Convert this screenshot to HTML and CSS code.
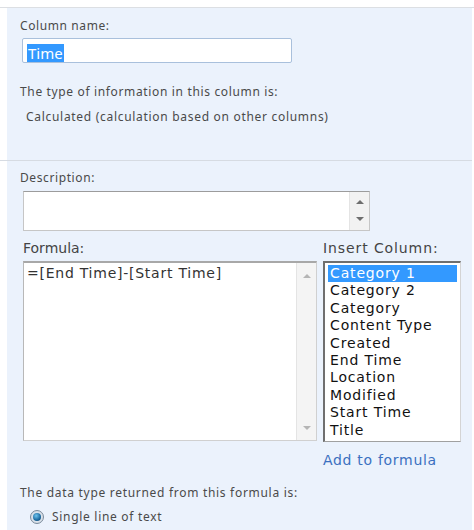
FILE: index.html
```html
<!DOCTYPE html>
<html>
<head>
<meta charset="utf-8">
<link rel="stylesheet" href="styles.css">
</head>
<body>
<div class="topbar"></div>
<section class="panel first">
  <div class="label">Column name:</div>
  <div class="input"><span class="sel">Time</span></div>
  <div class="label type-label">The type of information in this column is:</div>
  <div class="value">Calculated (calculation based on other columns)</div>
</section>
<div class="sep"></div>
<section class="panel second">
  <div class="label">Description:</div>
  <div class="desc">
    <div class="desc-text"></div>
    <div class="vscroll small">
      <span class="arrow up"></span>
      <span class="arrow down"></span>
    </div>
  </div>
  <div class="formula-row">
    <div class="col-formula">
      <div class="biglabel">Formula:</div>
      <div class="formula-box">
        <div class="formula-text">=[End Time]-[Start Time]</div>
        <div class="vscroll tall">
          <span class="arrow up light"></span>
          <span class="arrow down light"></span>
        </div>
      </div>
    </div>
    <div class="col-insert">
      <div class="biglabel insert-label">Insert Column:</div>
      <ul class="listbox">
        <li class="selected">Category 1</li>
        <li>Category 2</li>
        <li>Category</li>
        <li>Content Type</li>
        <li>Created</li>
        <li>End Time</li>
        <li>Location</li>
        <li>Modified</li>
        <li>Start Time</li>
        <li>Title</li>
      </ul>
      <a class="add">Add to formula</a>
    </div>
  </div>
  <div class="label ret-label">The data type returned from this formula is:</div>
  <div class="radio-row"><span class="radio"><span class="dot"></span></span><span class="radio-text">Single line of text</span></div>
</section>
</body>
</html>
```

FILE: styles.css
```css
html, body {
  margin: 0;
  padding: 0;
  background: #ffffff;
}
body {
  width: 474px;
  height: 530px;
  overflow: hidden;
  font-family: "Noto Sans", "Open Sans", sans-serif;
  color: #4a4a4a;
}
.topbar {
  height: 7px;
  border-bottom: 1px solid #dcdfe3;
}
.panel {
  margin-left: 7px;
  width: 465px;
  background: #ebf2fc;
  box-sizing: border-box;
}
.first {
  height: 152px;
  padding: 11px 0 0 13px;
}
.label {
  font-size: 12px;
  line-height: 14px;
  height: 14px;
  letter-spacing: 0.6px;
  white-space: nowrap;
}
.input {
  margin: 5px 0 0 2px;
  width: 270px;
  height: 25px;
  box-sizing: border-box;
  border: 1px solid #a9c0dc;
  border-radius: 2px;
  background: #fff;
  padding: 3px 0 0 4px;
}
.sel {
  display: inline-block;
  background: #3399ff;
  color: #fff;
  font-size: 15px;
  line-height: 18px;
  padding: 0 1px;
}
.type-label {
  margin-top: 22px;
  letter-spacing: 0.65px;
}
.value {
  margin: 11px 0 0 6px;
  font-size: 12px;
  line-height: 14px;
  letter-spacing: 0.7px;
  white-space: nowrap;
}
.sep {
  width: 472px;
  height: 1px;
  background: #d6dbe2;
}
.second {
  height: 369px;
  padding: 10px 0 0 13px;
}
.desc {
  display: flex;
  margin: 6px 0 0 3px;
  width: 347px;
  height: 40px;
  box-sizing: border-box;
  border: 1px solid #c6c6c6;
  border-top-color: #9c9c9c;
  background: #fff;
}
.desc-text {
  flex: 1;
}
.vscroll {
  width: 20px;
  background: #f2f2f2;
  border-left: 1px solid #e4e4e4;
  display: flex;
  flex-direction: column;
  justify-content: space-between;
  align-items: center;
  box-sizing: border-box;
}
.vscroll.small {
  padding: 8px 0 9px;
}
.vscroll.tall {
  padding: 11px 0 10px;
  background: #f4f4f4;
}
.arrow {
  width: 0;
  height: 0;
  border-left: 4px solid transparent;
  border-right: 4px solid transparent;
}
.arrow.up {
  border-bottom: 4px solid #6e6e6e;
}
.arrow.down {
  border-top: 4px solid #6e6e6e;
}
.arrow.up.light {
  border-bottom-color: #b5b5b5;
}
.arrow.down.light {
  border-top-color: #b5b5b5;
}
.formula-row {
  display: flex;
  gap: 6px;
  margin: 10px 0 0 3px;
}
.biglabel {
  font-family: "DejaVu Sans", Verdana, sans-serif;
  font-size: 14px;
  line-height: 14px;
  height: 14px;
  color: #444;
  white-space: nowrap;
}
.insert-label {
  letter-spacing: 0.9px;
}
.formula-box {
  display: flex;
  margin-top: 6px;
  width: 294px;
  height: 180px;
  box-sizing: border-box;
  border: 1px solid #d0d0d0;
  border-top: 2px solid #a8a8a8;
  border-left-color: #b8b8b8;
  background: #fff;
}
.formula-text {
  flex: 1;
  padding: 2px 0 0 3px;
  font-family: "DejaVu Sans", Verdana, sans-serif;
  font-size: 14px;
  letter-spacing: 0.75px;
  line-height: 16px;
  color: #333;
  white-space: nowrap;
}
.col-insert {
  display: flex;
  flex-direction: column;
}
.listbox {
  list-style: none;
  margin: 6px 0 0 0;
  padding: 2px 3px 0 3px;
  width: 138px;
  height: 181px;
  box-sizing: border-box;
  border: 1px solid #a0a0a0;
  border-top: 2px solid #6f6f6f;
  border-left: 2px solid #6f6f6f;
  border-right-color: #d4d4d4;
  background: #fff;
}
.listbox li {
  font-family: "DejaVu Sans", Verdana, sans-serif;
  font-size: 14px;
  letter-spacing: 0.85px;
  line-height: 17.4px;
  height: 17.4px;
  color: #111;
  padding-left: 2px;
  white-space: nowrap;
}
.listbox li.selected {
  background: #3399ff;
  color: #fff;
}
.add {
  margin-top: 11px;
  font-family: "DejaVu Sans", Verdana, sans-serif;
  font-size: 14px;
  letter-spacing: 0.7px;
  line-height: 14px;
  color: #3b70c0;
  white-space: nowrap;
}
.ret-label {
  margin-top: 19px;
  letter-spacing: 0.7px;
}
.radio-row {
  display: flex;
  align-items: center;
  margin: 10px 0 0 10px;
  gap: 8px;
  font-size: 12px;
  line-height: 14px;
  letter-spacing: 0.7px;
}
.radio {
  width: 14px;
  height: 14px;
  box-sizing: border-box;
  border-radius: 50%;
  border: 1px solid #7a8a9a;
  background: radial-gradient(circle, #e8eef5 0%, #cfd8e2 100%);
  display: flex;
  align-items: center;
  justify-content: center;
}
.dot {
  width: 8px;
  height: 8px;
  border-radius: 50%;
  background: radial-gradient(circle at 40% 35%, #6fc4ee 0%, #1c6aa0 60%, #0d3b5e 100%);
}
```
